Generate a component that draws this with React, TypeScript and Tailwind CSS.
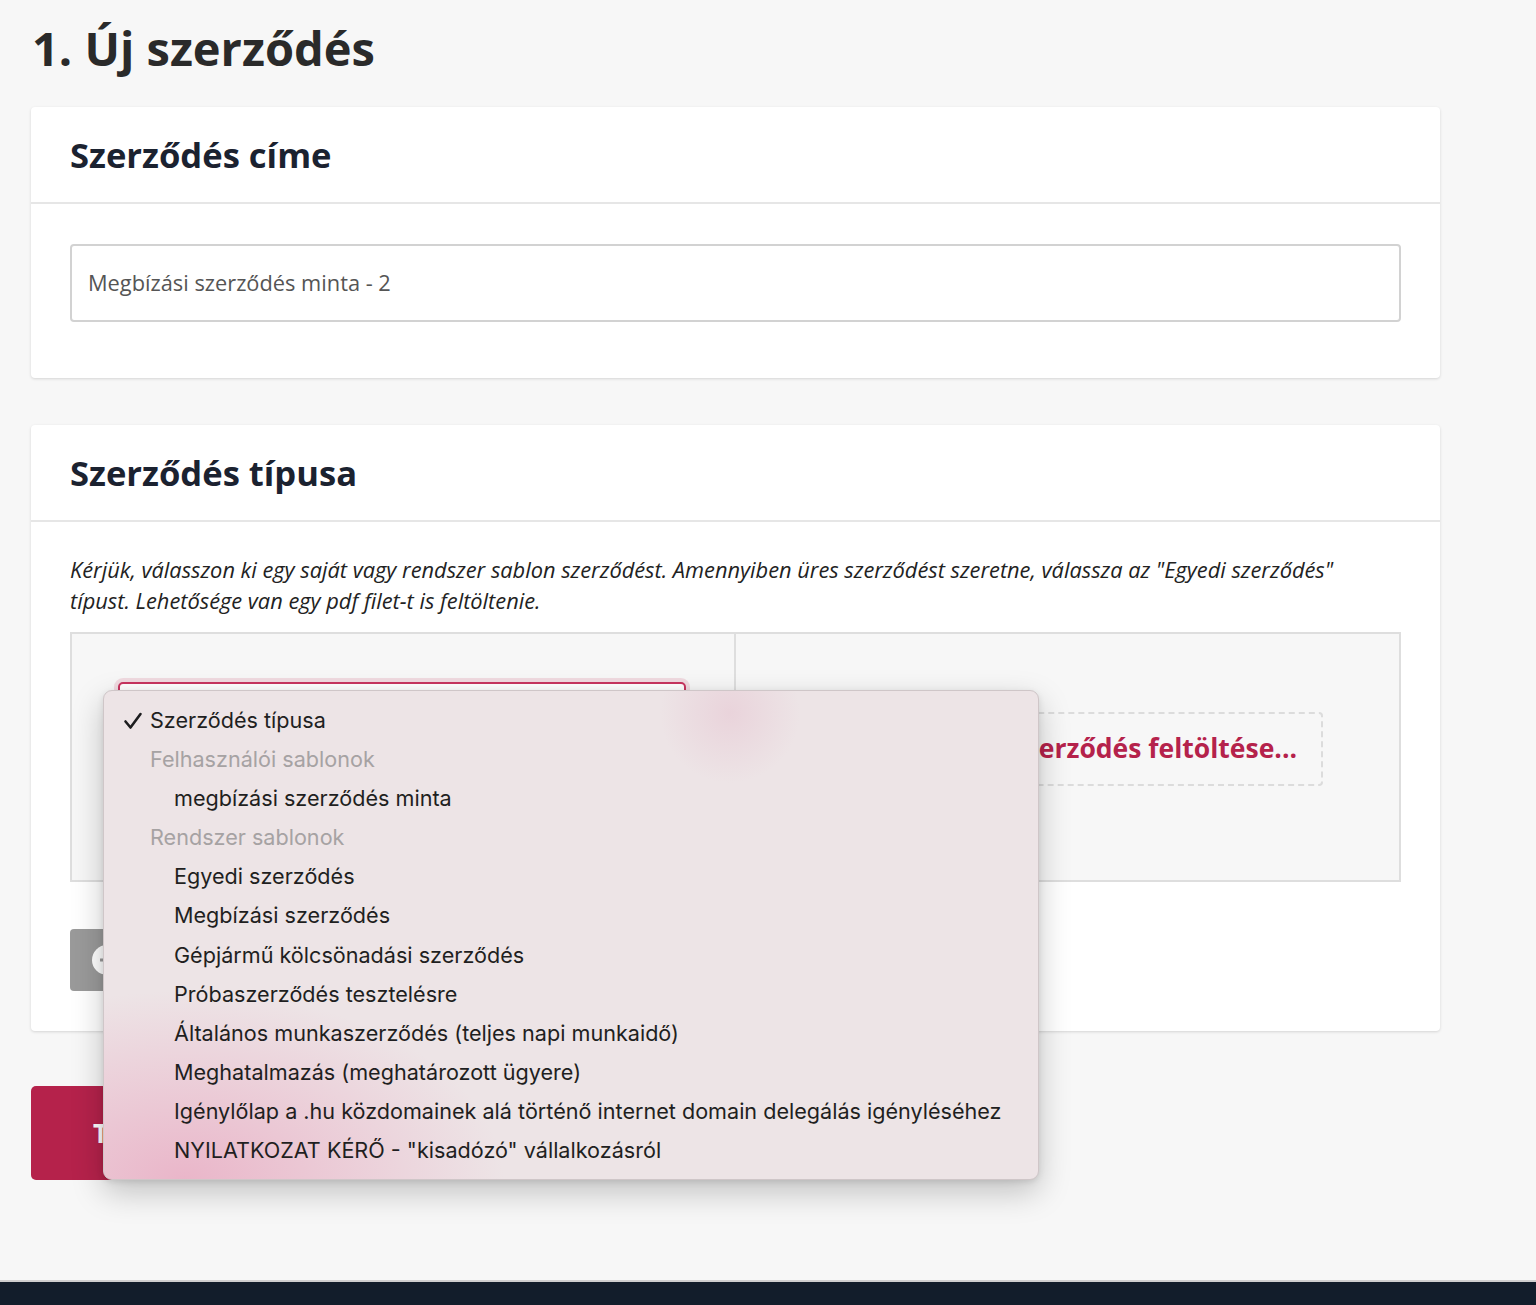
import React from "react";

const Check = () => (
  <svg width="20" height="20" viewBox="0 0 20 20" className="absolute left-[19px] top-[10px]">
    <path d="M2.5 10.5 L7.5 16.5 L17.5 3" fill="none" stroke="#1d1d1f" strokeWidth="2.6" strokeLinecap="round" strokeLinejoin="round" />
  </svg>
);

type Opt = { label: string; kind: "selected" | "group" | "option" };

const options: Opt[] = [
  { label: "Szerződés típusa", kind: "selected" },
  { label: "Felhasználói sablonok", kind: "group" },
  { label: "megbízási szerződés minta", kind: "option" },
  { label: "Rendszer sablonok", kind: "group" },
  { label: "Egyedi szerződés", kind: "option" },
  { label: "Megbízási szerződés", kind: "option" },
  { label: "Gépjármű kölcsönadási szerződés", kind: "option" },
  { label: "Próbaszerződés tesztelésre", kind: "option" },
  { label: "Általános munkaszerződés (teljes napi munkaidő)", kind: "option" },
  { label: "Meghatalmazás (meghatározott ügyere)", kind: "option" },
  { label: "Igénylőlap a .hu közdomainek alá történő internet domain delegálás igényléséhez", kind: "option" },
  { label: "NYILATKOZAT KÉRŐ - \"kisadózó\" vállalkozásról", kind: "option" },
];

function Dropdown() {
  return (
    <div className="absolute left-[-15px] top-[8px] w-[936px] h-[490px] z-20 rounded-[9px] border border-[#cfc6c8] bg-[#ede4e6] bg-[radial-gradient(circle_at_626px_22px,rgba(226,180,198,0.35),transparent_70px),radial-gradient(ellipse_320px_190px_at_80px_490px,rgba(233,170,194,0.8),transparent)] shadow-[0_12px_32px_rgba(0,0,0,0.22),0_2px_6px_rgba(0,0,0,0.1)] pt-[10px] font-['Inter','Noto_Sans',sans-serif] text-[21.6px] leading-[39.1px] text-[#1f1f21] overflow-hidden">
      {options.map((o, i) => (
        <div
          key={i}
          className={
            "relative h-[39.1px] whitespace-nowrap " +
            (o.kind === "option" ? "pl-[70px]" : "pl-[46px]") +
            (o.kind === "group" ? " text-[#a6a2a3]" : "")
          }
        >
          {o.kind === "selected" && <Check />}
          {o.label}
        </div>
      ))}
    </div>
  );
}

function CardHeader({ title }: { title: string }) {
  return (
    <div className="h-[97px] flex items-center px-[39px] border-b-2 border-[#e6e6e6]">
      <h2 className="text-[34.6px] leading-[43px] font-bold text-[#1b2230]">{title}</h2>
    </div>
  );
}

export default function App() {
  return (
    <div className="min-h-[1305px] bg-[#f7f7f7] font-['Open_Sans',sans-serif] flex flex-col">
      <div className="pl-[31px] w-[1440px] flex-1">
        <h1 className="pt-[19px] pl-[1px] text-[47px] leading-[58px] font-bold text-[#2a2a2a]">1. Új szerződés</h1>

        <div className="mt-[30px] bg-white rounded-[4px] shadow-[0_1px_3px_rgba(0,0,0,0.14)]">
          <CardHeader title="Szerződés címe" />
          <div className="pt-[40px] pb-[56px] px-[39px]">
            <div className="h-[78px] border-2 border-[#d2d2d2] rounded-[4px] flex items-center px-[16px] text-[21.8px] text-[#555]">
              Megbízási szerződés minta - 2
            </div>
          </div>
        </div>

        <div className="mt-[47px] bg-white rounded-[4px] shadow-[0_1px_3px_rgba(0,0,0,0.14)]">
          <CardHeader title="Szerződés típusa" />
          <div className="pt-[32px] pb-[40px] px-[39px]">
            <p className="italic text-[21.8px] leading-[31px] text-[#222] whitespace-nowrap">
              Kérjük, válasszon ki egy saját vagy rendszer sablon szerződést. Amennyiben üres szerződést szeretne, válassza az "Egyedi szerződés"
              <br />
              típust. Lehetősége van egy pdf filet-t is feltöltenie.
            </p>
            <div className="mt-[16px] h-[250px] border-2 border-[#dedede] bg-[#f7f7f7] grid grid-cols-2">
              <div className="border-r-2 border-[#dedede] pl-[46px] pr-[48px] pt-[48px]">
                <div className="relative">
                  <div className="h-[60px] rounded-[5px] border-2 border-[#c8345f] bg-white shadow-[0_0_0_4px_rgba(200,52,95,0.15)]"></div>
                  <Dropdown />
                </div>
              </div>
              <div className="flex justify-end items-start pt-[78px] pr-[76px]">
                <div className="h-[74px] border-2 border-dashed border-[#dcdcdc] rounded-[4px] flex items-center px-[24px] text-[26.5px] font-bold text-[#b5224b]">
                  Saját szerződés feltöltése...
                </div>
              </div>
            </div>
            <div className="mt-[47px] flex">
              <div className="h-[62px] w-[300px] rounded-[4px] bg-[#9a9a9a] flex items-center pl-[22px]">
                <svg width="30" height="30" viewBox="0 0 30 30">
                  <circle cx="15" cy="15" r="15" fill="#fff" />
                  <path d="M15 8v14M8 15h14" stroke="#9a9a9a" strokeWidth="3" />
                </svg>
              </div>
            </div>
          </div>
        </div>

        <div className="mt-[55px] flex">
          <div className="h-[94px] w-[300px] rounded-[5px] bg-[#b5224b] flex items-center pl-[62px] text-white text-[26px] font-bold">
            Tovább
          </div>
        </div>
      </div>
      <div className="mt-[99px] h-[25px] bg-[#121d2b] border-t-2 border-[#cfcfcf]"></div>
    </div>
  );
}
